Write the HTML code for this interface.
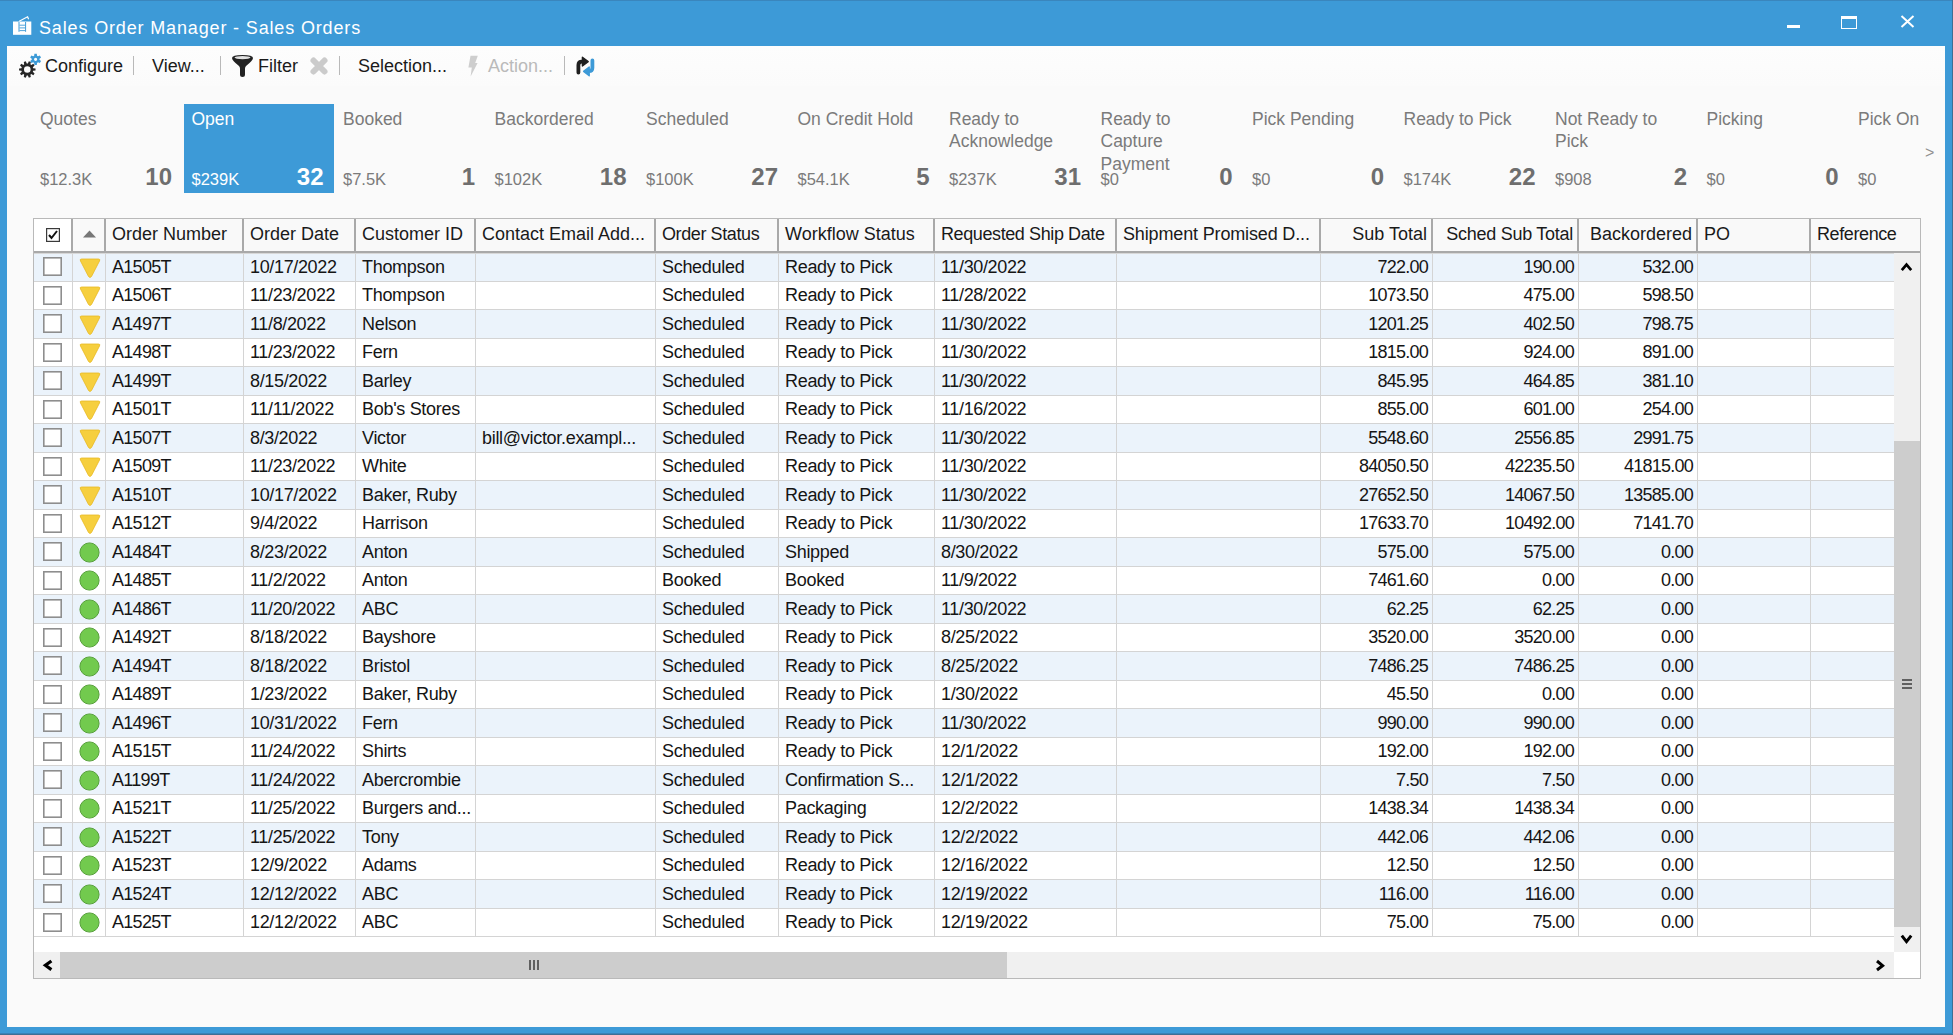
<!DOCTYPE html><html><head><meta charset="utf-8"><title>Sales Order Manager - Sales Orders</title><style>

*{box-sizing:border-box}
html,body{margin:0;padding:0}
body{width:1953px;height:1035px;overflow:hidden;position:relative;background:#3d9ad7;font-family:"Liberation Sans", sans-serif;}
.a{position:absolute;white-space:nowrap}
#win{position:absolute;left:7px;top:46px;width:1938px;height:981px;background:#fafafa}
.title{left:39px;top:17px;font-size:18px;letter-spacing:0.85px;color:#fff;line-height:22px}
.tb{font-size:18px;color:#1a1a1a;top:55px;line-height:22px}
.tsep{width:1px;height:19px;top:56px;background:#b9b9b9}
.tl{font-size:17.5px;color:#7b7b7b;line-height:22.5px;white-space:nowrap}
.tv{font-size:16.5px;color:#7b7b7b;line-height:20px}
.tc{font-size:24px;font-weight:bold;color:#6e6e6e;line-height:26px;text-align:right;width:60px}
.sel .tl,.sel .tv,.sel .tc{color:#fff}
.hd{font-size:18px;color:#1a1a1a;line-height:20px;top:224.3px;letter-spacing:0px}
.c{font-size:18px;color:#151515;line-height:20px;letter-spacing:-0.3px}
.n{letter-spacing:-0.75px}
.d{letter-spacing:-0.35px}
.o{letter-spacing:-0.7px}
.r{text-align:right}

</style></head><body>
<div class="a" style="left:0;top:0;width:1953px;height:1px;background:#3a86bd"></div>
<div class="a" style="left:1952px;top:0;width:1px;height:1035px;background:#3f6f94"></div>
<div class="a" style="left:0;top:1033px;width:1953px;height:1px;background:#3a82b8"></div>
<div class="a" style="left:0;top:1034px;width:1953px;height:1px;background:#3f6f94"></div>
<svg class="a" style="left:13px;top:16px" width="19" height="19" viewBox="0 0 19 19">
<rect x="0" y="5.5" width="18.3" height="13.3" fill="#fff"/>
<path d="M6 6 V15.8 M12.6 6 V15.8" stroke="#3d9ad7" stroke-width="1"/>
<path d="M6.5 9.2 H12.1 M6.5 11.9 H12.1 M6.5 14.6 H12.1" stroke="#3d9ad7" stroke-width="0.9"/>
<path d="M6.2 5.2 L14.6 0.8 L15.6 3.2" stroke="#fff" stroke-width="1.2" fill="none"/>
</svg>
<div class="a title">Sales Order Manager - Sales Orders</div>
<div class="a" style="left:1787px;top:25px;width:13px;height:3px;background:#fff"></div>
<div class="a" style="left:1841px;top:16px;width:16px;height:13px;border:1.5px solid #fff;border-top-width:3px"></div>
<svg class="a" style="left:1900px;top:15px" width="15" height="13" viewBox="0 0 15 13"><path d="M1.5 1 L13.5 12 M13.5 1 L1.5 12" stroke="#fff" stroke-width="2"/></svg>
<div id="win"></div>
<div class="a" style="left:7px;top:46px;width:1938px;height:40px;background:linear-gradient(#fdfdfd,#fbfbfb)"></div>
<svg class="a" style="left:14px;top:50px" width="34" height="32" viewBox="0 0 34 32"><path fill-rule="evenodd" fill="#262626" d="M13.83 13.52 L14.86 11.35 L16.83 11.99 L16.39 14.35 L17.24 14.97 L19.35 13.82 L20.57 15.50 L18.82 17.15 L19.15 18.15 L21.53 18.46 L21.53 20.54 L19.15 20.85 L18.82 21.85 L20.57 23.50 L19.35 25.18 L17.24 24.03 L16.39 24.65 L16.83 27.01 L14.86 27.65 L13.83 25.48 L12.77 25.48 L11.74 27.65 L9.77 27.01 L10.21 24.65 L9.36 24.03 L7.25 25.18 L6.03 23.50 L7.78 21.85 L7.45 20.85 L5.07 20.54 L5.07 18.46 L7.45 18.15 L7.78 17.15 L6.03 15.50 L7.25 13.82 L9.36 14.97 L10.21 14.35 L9.77 11.99 L11.74 11.35 L12.77 13.52 Z M16.60 19.50 A3.3 3.3 0 1 0 10.00 19.50 A3.3 3.3 0 1 0 16.60 19.50 Z"/><path fill-rule="evenodd" fill="#3c9ad6" d="M20.16 5.67 L20.41 3.72 L22.79 3.72 L23.04 5.67 L24.02 6.24 L25.84 5.49 L27.02 7.54 L25.46 8.73 L25.46 9.87 L27.02 11.06 L25.84 13.11 L24.02 12.36 L23.04 12.93 L22.79 14.88 L20.41 14.88 L20.16 12.93 L19.18 12.36 L17.36 13.11 L16.18 11.06 L17.74 9.87 L17.74 8.73 L16.18 7.54 L17.36 5.49 L19.18 6.24 Z M23.20 9.30 A1.6 1.6 0 1 0 20.00 9.30 A1.6 1.6 0 1 0 23.20 9.30 Z"/></svg>
<div class="a tb" style="left:45px">Configure</div>
<div class="a tsep" style="left:133px"></div>
<div class="a tb" style="left:152px">View...</div>
<div class="a tsep" style="left:220px"></div>
<svg class="a" style="left:231px;top:54px" width="23" height="24" viewBox="0 0 23 24"><path d="M1 4 Q1 1 11.5 1 Q22 1 22 4 Q22 6.5 15 12 Q14 13 14 14.5 V20.5 Q14 23 11.5 23 Q9 23 9 20.5 V14.5 Q9 13 8 12 Q1 6.5 1 4 Z" fill="#222"/><ellipse cx="11.5" cy="3.6" rx="8" ry="1.6" fill="#e2e2e2"/></svg>
<div class="a tb" style="left:258px">Filter</div>
<svg class="a" style="left:309px;top:56px" width="20" height="20" viewBox="0 0 20 20"><path d="M4.5 4.5 L15.5 15.5 M15.5 4.5 L4.5 15.5" stroke="#cbcbcb" stroke-width="6" stroke-linecap="round"/></svg>
<div class="a tsep" style="left:339px"></div>
<div class="a tb" style="left:358px">Selection...</div>
<svg class="a" style="left:466px;top:55px" width="14" height="22" viewBox="0 0 14 22"><path d="M4.5 0.8 H11.8 L9.2 8 H11.6 L4.6 21.5 L5.8 12.6 H2.4 Z" fill="#cecece"/></svg>
<div class="a tb" style="left:488px;color:#bababa">Action...</div>
<div class="a tsep" style="left:564px"></div>
<svg class="a" style="left:575px;top:55px" width="22" height="23" viewBox="0 0 22 23">
<path d="M3.4 17.6 V10 Q3.4 6.6 6.8 6.6 H8.5" stroke="#1f1f1f" stroke-width="3.8" fill="none" stroke-linecap="round"/><path d="M7.4 2.3 L13.2 6.6 L7.4 10.9 Z" fill="#1f1f1f" stroke="#1f1f1f" stroke-width="1.4" stroke-linejoin="round"/>
<path d="M17.4 5.4 V12.8 Q17.4 16.2 14 16.2 H12.5" stroke="#3d9ad7" stroke-width="3.8" fill="none" stroke-linecap="round"/><path d="M14.2 12 L8.6 16.4 L14.2 20.8 Z" fill="#3d9ad7" stroke="#3d9ad7" stroke-width="1.4" stroke-linejoin="round"/></svg>
<div class="">
<div class="a tl" style="left:40.0px;top:107.5px">Quotes</div>
<div class="a tv" style="left:40.0px;top:169px">$12.3K</div>
<div class="a tc" style="left:112.0px;top:164px">10</div>
</div>
<div class="a" style="left:183.5px;top:104px;width:150px;height:89px;background:#3d9ad7"></div>
<div class="sel">
<div class="a tl" style="left:191.5px;top:107.5px">Open</div>
<div class="a tv" style="left:191.5px;top:169px">$239K</div>
<div class="a tc" style="left:263.5px;top:164px">32</div>
</div>
<div class="">
<div class="a tl" style="left:343.0px;top:107.5px">Booked</div>
<div class="a tv" style="left:343.0px;top:169px">$7.5K</div>
<div class="a tc" style="left:415.0px;top:164px">1</div>
</div>
<div class="">
<div class="a tl" style="left:494.5px;top:107.5px">Backordered</div>
<div class="a tv" style="left:494.5px;top:169px">$102K</div>
<div class="a tc" style="left:566.5px;top:164px">18</div>
</div>
<div class="">
<div class="a tl" style="left:646.0px;top:107.5px">Scheduled</div>
<div class="a tv" style="left:646.0px;top:169px">$100K</div>
<div class="a tc" style="left:718.0px;top:164px">27</div>
</div>
<div class="">
<div class="a tl" style="left:797.5px;top:107.5px">On Credit Hold</div>
<div class="a tv" style="left:797.5px;top:169px">$54.1K</div>
<div class="a tc" style="left:869.5px;top:164px">5</div>
</div>
<div class="">
<div class="a tl" style="left:949.0px;top:107.5px">Ready to<br>Acknowledge</div>
<div class="a tv" style="left:949.0px;top:169px">$237K</div>
<div class="a tc" style="left:1021.0px;top:164px">31</div>
</div>
<div class="">
<div class="a tl" style="left:1100.5px;top:107.5px">Ready to<br>Capture<br>Payment</div>
<div class="a tv" style="left:1100.5px;top:169px">$0</div>
<div class="a tc" style="left:1172.5px;top:164px">0</div>
</div>
<div class="">
<div class="a tl" style="left:1252.0px;top:107.5px">Pick Pending</div>
<div class="a tv" style="left:1252.0px;top:169px">$0</div>
<div class="a tc" style="left:1324.0px;top:164px">0</div>
</div>
<div class="">
<div class="a tl" style="left:1403.5px;top:107.5px">Ready to Pick</div>
<div class="a tv" style="left:1403.5px;top:169px">$174K</div>
<div class="a tc" style="left:1475.5px;top:164px">22</div>
</div>
<div class="">
<div class="a tl" style="left:1555.0px;top:107.5px">Not Ready to<br>Pick</div>
<div class="a tv" style="left:1555.0px;top:169px">$908</div>
<div class="a tc" style="left:1627.0px;top:164px">2</div>
</div>
<div class="">
<div class="a tl" style="left:1706.5px;top:107.5px">Picking</div>
<div class="a tv" style="left:1706.5px;top:169px">$0</div>
<div class="a tc" style="left:1778.5px;top:164px">0</div>
</div>
<div class="">
<div class="a tl" style="left:1858.0px;top:107.5px">Pick On</div>
<div class="a tv" style="left:1858.0px;top:169px">$0</div>
</div>
<div class="a" style="left:1925px;top:144px;font-size:16px;color:#909090">&gt;</div>
<div class="a" style="left:33px;top:218px;width:1888px;height:761px;background:#fff;border:1px solid #b9b9b9"></div>
<div class="a" style="left:34px;top:219px;width:1886px;height:33px;background:#f9f9f9"></div>
<div class="a" style="left:34px;top:219px;width:37px;height:33px;background:#fff"></div>
<div class="a" style="left:34px;top:252.00px;width:1860px;height:28.50px;background:#ebf3fb"></div>
<div class="a" style="left:34px;top:309.00px;width:1860px;height:28.50px;background:#ebf3fb"></div>
<div class="a" style="left:34px;top:366.00px;width:1860px;height:28.50px;background:#ebf3fb"></div>
<div class="a" style="left:34px;top:423.00px;width:1860px;height:28.50px;background:#ebf3fb"></div>
<div class="a" style="left:34px;top:480.00px;width:1860px;height:28.50px;background:#ebf3fb"></div>
<div class="a" style="left:34px;top:537.00px;width:1860px;height:28.50px;background:#ebf3fb"></div>
<div class="a" style="left:34px;top:594.00px;width:1860px;height:28.50px;background:#ebf3fb"></div>
<div class="a" style="left:34px;top:651.00px;width:1860px;height:28.50px;background:#ebf3fb"></div>
<div class="a" style="left:34px;top:708.00px;width:1860px;height:28.50px;background:#ebf3fb"></div>
<div class="a" style="left:34px;top:765.00px;width:1860px;height:28.50px;background:#ebf3fb"></div>
<div class="a" style="left:34px;top:822.00px;width:1860px;height:28.50px;background:#ebf3fb"></div>
<div class="a" style="left:34px;top:879.00px;width:1860px;height:28.50px;background:#ebf3fb"></div>
<div class="a" style="left:34px;top:280.50px;width:1860px;height:1px;background:#d4d4d4"></div>
<div class="a" style="left:34px;top:309.00px;width:1860px;height:1px;background:#d4d4d4"></div>
<div class="a" style="left:34px;top:337.50px;width:1860px;height:1px;background:#d4d4d4"></div>
<div class="a" style="left:34px;top:366.00px;width:1860px;height:1px;background:#d4d4d4"></div>
<div class="a" style="left:34px;top:394.50px;width:1860px;height:1px;background:#d4d4d4"></div>
<div class="a" style="left:34px;top:423.00px;width:1860px;height:1px;background:#d4d4d4"></div>
<div class="a" style="left:34px;top:451.50px;width:1860px;height:1px;background:#d4d4d4"></div>
<div class="a" style="left:34px;top:480.00px;width:1860px;height:1px;background:#d4d4d4"></div>
<div class="a" style="left:34px;top:508.50px;width:1860px;height:1px;background:#d4d4d4"></div>
<div class="a" style="left:34px;top:537.00px;width:1860px;height:1px;background:#d4d4d4"></div>
<div class="a" style="left:34px;top:565.50px;width:1860px;height:1px;background:#d4d4d4"></div>
<div class="a" style="left:34px;top:594.00px;width:1860px;height:1px;background:#d4d4d4"></div>
<div class="a" style="left:34px;top:622.50px;width:1860px;height:1px;background:#d4d4d4"></div>
<div class="a" style="left:34px;top:651.00px;width:1860px;height:1px;background:#d4d4d4"></div>
<div class="a" style="left:34px;top:679.50px;width:1860px;height:1px;background:#d4d4d4"></div>
<div class="a" style="left:34px;top:708.00px;width:1860px;height:1px;background:#d4d4d4"></div>
<div class="a" style="left:34px;top:736.50px;width:1860px;height:1px;background:#d4d4d4"></div>
<div class="a" style="left:34px;top:765.00px;width:1860px;height:1px;background:#d4d4d4"></div>
<div class="a" style="left:34px;top:793.50px;width:1860px;height:1px;background:#d4d4d4"></div>
<div class="a" style="left:34px;top:822.00px;width:1860px;height:1px;background:#d4d4d4"></div>
<div class="a" style="left:34px;top:850.50px;width:1860px;height:1px;background:#d4d4d4"></div>
<div class="a" style="left:34px;top:879.00px;width:1860px;height:1px;background:#d4d4d4"></div>
<div class="a" style="left:34px;top:907.50px;width:1860px;height:1px;background:#d4d4d4"></div>
<div class="a" style="left:34px;top:936.00px;width:1860px;height:1px;background:#d4d4d4"></div>
<div class="a" style="left:72px;top:252px;width:1px;height:685.0px;background:#d4d4d4"></div>
<div class="a" style="left:105px;top:252px;width:1px;height:685.0px;background:#d4d4d4"></div>
<div class="a" style="left:243px;top:252px;width:1px;height:685.0px;background:#d4d4d4"></div>
<div class="a" style="left:355px;top:252px;width:1px;height:685.0px;background:#d4d4d4"></div>
<div class="a" style="left:475px;top:252px;width:1px;height:685.0px;background:#d4d4d4"></div>
<div class="a" style="left:655px;top:252px;width:1px;height:685.0px;background:#d4d4d4"></div>
<div class="a" style="left:778px;top:252px;width:1px;height:685.0px;background:#d4d4d4"></div>
<div class="a" style="left:934px;top:252px;width:1px;height:685.0px;background:#d4d4d4"></div>
<div class="a" style="left:1116px;top:252px;width:1px;height:685.0px;background:#d4d4d4"></div>
<div class="a" style="left:1320px;top:252px;width:1px;height:685.0px;background:#d4d4d4"></div>
<div class="a" style="left:1432px;top:252px;width:1px;height:685.0px;background:#d4d4d4"></div>
<div class="a" style="left:1578px;top:252px;width:1px;height:685.0px;background:#d4d4d4"></div>
<div class="a" style="left:1697px;top:252px;width:1px;height:685.0px;background:#d4d4d4"></div>
<div class="a" style="left:1810px;top:252px;width:1px;height:685.0px;background:#d4d4d4"></div>
<div class="a" style="left:71px;top:219px;width:2px;height:33px;background:#a9a9a9"></div>
<div class="a" style="left:104px;top:219px;width:2px;height:33px;background:#a9a9a9"></div>
<div class="a" style="left:242px;top:219px;width:2px;height:33px;background:#a9a9a9"></div>
<div class="a" style="left:354px;top:219px;width:2px;height:33px;background:#a9a9a9"></div>
<div class="a" style="left:474px;top:219px;width:2px;height:33px;background:#a9a9a9"></div>
<div class="a" style="left:654px;top:219px;width:2px;height:33px;background:#a9a9a9"></div>
<div class="a" style="left:777px;top:219px;width:2px;height:33px;background:#a9a9a9"></div>
<div class="a" style="left:933px;top:219px;width:2px;height:33px;background:#a9a9a9"></div>
<div class="a" style="left:1115px;top:219px;width:2px;height:33px;background:#a9a9a9"></div>
<div class="a" style="left:1319px;top:219px;width:2px;height:33px;background:#a9a9a9"></div>
<div class="a" style="left:1431px;top:219px;width:2px;height:33px;background:#a9a9a9"></div>
<div class="a" style="left:1577px;top:219px;width:2px;height:33px;background:#a9a9a9"></div>
<div class="a" style="left:1696px;top:219px;width:2px;height:33px;background:#a9a9a9"></div>
<div class="a" style="left:1809px;top:219px;width:2px;height:33px;background:#a9a9a9"></div>
<div class="a" style="left:34px;top:251px;width:1886px;height:2px;background:#a9a9a9"></div>
<div class="a" style="left:34px;top:253px;width:1886px;height:1px;background:#d8d8d8"></div>
<svg class="a" style="left:46px;top:228px" width="14" height="14" viewBox="0 0 14 14"><rect x="0.6" y="0.6" width="12.8" height="12.8" fill="#fff" stroke="#3a3a3a" stroke-width="1.2"/><path d="M3 7 L5.5 10 L11 3" stroke="#111" stroke-width="2" fill="none"/></svg>
<svg class="a" style="left:83px;top:230px" width="13" height="8" viewBox="0 0 13 8"><path d="M0 7.5 L6.5 0.5 L13 7.5 Z" fill="#777"/></svg>
<div class="a hd" style="left:112px;letter-spacing:0px">Order Number</div>
<div class="a hd" style="left:250px;letter-spacing:0px">Order Date</div>
<div class="a hd" style="left:362px;letter-spacing:0px">Customer ID</div>
<div class="a hd" style="left:482px;letter-spacing:0px">Contact Email Add...</div>
<div class="a hd" style="left:662px;letter-spacing:-0.4px">Order Status</div>
<div class="a hd" style="left:785px;letter-spacing:0px">Workflow Status</div>
<div class="a hd" style="left:941px;letter-spacing:-0.4px">Requested Ship Date</div>
<div class="a hd" style="left:1123px;letter-spacing:-0.15px">Shipment Promised D...</div>
<div class="a hd r" style="left:1319px;width:108px;letter-spacing:0px">Sub Total</div>
<div class="a hd r" style="left:1431px;width:142px;letter-spacing:-0.27px">Sched Sub Total</div>
<div class="a hd r" style="left:1577px;width:115px;letter-spacing:0px">Backordered</div>
<div class="a hd" style="left:1704px;letter-spacing:0px">PO</div>
<div class="a hd" style="left:1817px;letter-spacing:-0.4px">Reference</div>
<svg class="a" style="left:43px;top:257.0px" width="19" height="19" viewBox="0 0 19 19"><rect x="0.8" y="0.8" width="17.4" height="17.4" fill="#fff" stroke="#8e8e8e" stroke-width="1.6"/></svg>
<svg class="a" style="left:79px;top:257.5px" width="22" height="20" viewBox="0 0 22 20"><path d="M2.5 1 H19.5 Q21.5 1 20.5 3 L12.5 18.5 Q11 20.5 9.5 18.5 L1.5 3 Q0.5 1 2.5 1 Z" fill="#f6cf3e" stroke="#e8b923" stroke-width="0.8"/></svg>
<div class="a c o" style="left:112px;top:256.8px">A1505T</div>
<div class="a c d" style="left:250px;top:256.8px">10/17/2022</div>
<div class="a c" style="left:362px;top:256.8px">Thompson</div>
<div class="a c" style="left:662px;top:256.8px">Scheduled</div>
<div class="a c" style="left:785px;top:256.8px">Ready to Pick</div>
<div class="a c d" style="left:941px;top:256.8px">11/30/2022</div>
<div class="a c n r" style="left:1319px;top:256.8px;width:109px">722.00</div>
<div class="a c n r" style="left:1431px;top:256.8px;width:143px">190.00</div>
<div class="a c n r" style="left:1577px;top:256.8px;width:116px">532.00</div>
<svg class="a" style="left:43px;top:285.5px" width="19" height="19" viewBox="0 0 19 19"><rect x="0.8" y="0.8" width="17.4" height="17.4" fill="#fff" stroke="#8e8e8e" stroke-width="1.6"/></svg>
<svg class="a" style="left:79px;top:286.0px" width="22" height="20" viewBox="0 0 22 20"><path d="M2.5 1 H19.5 Q21.5 1 20.5 3 L12.5 18.5 Q11 20.5 9.5 18.5 L1.5 3 Q0.5 1 2.5 1 Z" fill="#f6cf3e" stroke="#e8b923" stroke-width="0.8"/></svg>
<div class="a c o" style="left:112px;top:285.3px">A1506T</div>
<div class="a c d" style="left:250px;top:285.3px">11/23/2022</div>
<div class="a c" style="left:362px;top:285.3px">Thompson</div>
<div class="a c" style="left:662px;top:285.3px">Scheduled</div>
<div class="a c" style="left:785px;top:285.3px">Ready to Pick</div>
<div class="a c d" style="left:941px;top:285.3px">11/28/2022</div>
<div class="a c n r" style="left:1319px;top:285.3px;width:109px">1073.50</div>
<div class="a c n r" style="left:1431px;top:285.3px;width:143px">475.00</div>
<div class="a c n r" style="left:1577px;top:285.3px;width:116px">598.50</div>
<svg class="a" style="left:43px;top:314.0px" width="19" height="19" viewBox="0 0 19 19"><rect x="0.8" y="0.8" width="17.4" height="17.4" fill="#fff" stroke="#8e8e8e" stroke-width="1.6"/></svg>
<svg class="a" style="left:79px;top:314.5px" width="22" height="20" viewBox="0 0 22 20"><path d="M2.5 1 H19.5 Q21.5 1 20.5 3 L12.5 18.5 Q11 20.5 9.5 18.5 L1.5 3 Q0.5 1 2.5 1 Z" fill="#f6cf3e" stroke="#e8b923" stroke-width="0.8"/></svg>
<div class="a c o" style="left:112px;top:313.8px">A1497T</div>
<div class="a c d" style="left:250px;top:313.8px">11/8/2022</div>
<div class="a c" style="left:362px;top:313.8px">Nelson</div>
<div class="a c" style="left:662px;top:313.8px">Scheduled</div>
<div class="a c" style="left:785px;top:313.8px">Ready to Pick</div>
<div class="a c d" style="left:941px;top:313.8px">11/30/2022</div>
<div class="a c n r" style="left:1319px;top:313.8px;width:109px">1201.25</div>
<div class="a c n r" style="left:1431px;top:313.8px;width:143px">402.50</div>
<div class="a c n r" style="left:1577px;top:313.8px;width:116px">798.75</div>
<svg class="a" style="left:43px;top:342.5px" width="19" height="19" viewBox="0 0 19 19"><rect x="0.8" y="0.8" width="17.4" height="17.4" fill="#fff" stroke="#8e8e8e" stroke-width="1.6"/></svg>
<svg class="a" style="left:79px;top:343.0px" width="22" height="20" viewBox="0 0 22 20"><path d="M2.5 1 H19.5 Q21.5 1 20.5 3 L12.5 18.5 Q11 20.5 9.5 18.5 L1.5 3 Q0.5 1 2.5 1 Z" fill="#f6cf3e" stroke="#e8b923" stroke-width="0.8"/></svg>
<div class="a c o" style="left:112px;top:342.3px">A1498T</div>
<div class="a c d" style="left:250px;top:342.3px">11/23/2022</div>
<div class="a c" style="left:362px;top:342.3px">Fern</div>
<div class="a c" style="left:662px;top:342.3px">Scheduled</div>
<div class="a c" style="left:785px;top:342.3px">Ready to Pick</div>
<div class="a c d" style="left:941px;top:342.3px">11/30/2022</div>
<div class="a c n r" style="left:1319px;top:342.3px;width:109px">1815.00</div>
<div class="a c n r" style="left:1431px;top:342.3px;width:143px">924.00</div>
<div class="a c n r" style="left:1577px;top:342.3px;width:116px">891.00</div>
<svg class="a" style="left:43px;top:371.0px" width="19" height="19" viewBox="0 0 19 19"><rect x="0.8" y="0.8" width="17.4" height="17.4" fill="#fff" stroke="#8e8e8e" stroke-width="1.6"/></svg>
<svg class="a" style="left:79px;top:371.5px" width="22" height="20" viewBox="0 0 22 20"><path d="M2.5 1 H19.5 Q21.5 1 20.5 3 L12.5 18.5 Q11 20.5 9.5 18.5 L1.5 3 Q0.5 1 2.5 1 Z" fill="#f6cf3e" stroke="#e8b923" stroke-width="0.8"/></svg>
<div class="a c o" style="left:112px;top:370.8px">A1499T</div>
<div class="a c d" style="left:250px;top:370.8px">8/15/2022</div>
<div class="a c" style="left:362px;top:370.8px">Barley</div>
<div class="a c" style="left:662px;top:370.8px">Scheduled</div>
<div class="a c" style="left:785px;top:370.8px">Ready to Pick</div>
<div class="a c d" style="left:941px;top:370.8px">11/30/2022</div>
<div class="a c n r" style="left:1319px;top:370.8px;width:109px">845.95</div>
<div class="a c n r" style="left:1431px;top:370.8px;width:143px">464.85</div>
<div class="a c n r" style="left:1577px;top:370.8px;width:116px">381.10</div>
<svg class="a" style="left:43px;top:399.5px" width="19" height="19" viewBox="0 0 19 19"><rect x="0.8" y="0.8" width="17.4" height="17.4" fill="#fff" stroke="#8e8e8e" stroke-width="1.6"/></svg>
<svg class="a" style="left:79px;top:400.0px" width="22" height="20" viewBox="0 0 22 20"><path d="M2.5 1 H19.5 Q21.5 1 20.5 3 L12.5 18.5 Q11 20.5 9.5 18.5 L1.5 3 Q0.5 1 2.5 1 Z" fill="#f6cf3e" stroke="#e8b923" stroke-width="0.8"/></svg>
<div class="a c o" style="left:112px;top:399.3px">A1501T</div>
<div class="a c d" style="left:250px;top:399.3px">11/11/2022</div>
<div class="a c" style="left:362px;top:399.3px">Bob's Stores</div>
<div class="a c" style="left:662px;top:399.3px">Scheduled</div>
<div class="a c" style="left:785px;top:399.3px">Ready to Pick</div>
<div class="a c d" style="left:941px;top:399.3px">11/16/2022</div>
<div class="a c n r" style="left:1319px;top:399.3px;width:109px">855.00</div>
<div class="a c n r" style="left:1431px;top:399.3px;width:143px">601.00</div>
<div class="a c n r" style="left:1577px;top:399.3px;width:116px">254.00</div>
<svg class="a" style="left:43px;top:428.0px" width="19" height="19" viewBox="0 0 19 19"><rect x="0.8" y="0.8" width="17.4" height="17.4" fill="#fff" stroke="#8e8e8e" stroke-width="1.6"/></svg>
<svg class="a" style="left:79px;top:428.5px" width="22" height="20" viewBox="0 0 22 20"><path d="M2.5 1 H19.5 Q21.5 1 20.5 3 L12.5 18.5 Q11 20.5 9.5 18.5 L1.5 3 Q0.5 1 2.5 1 Z" fill="#f6cf3e" stroke="#e8b923" stroke-width="0.8"/></svg>
<div class="a c o" style="left:112px;top:427.8px">A1507T</div>
<div class="a c d" style="left:250px;top:427.8px">8/3/2022</div>
<div class="a c" style="left:362px;top:427.8px">Victor</div>
<div class="a c" style="left:482px;top:427.8px">bill@victor.exampl...</div>
<div class="a c" style="left:662px;top:427.8px">Scheduled</div>
<div class="a c" style="left:785px;top:427.8px">Ready to Pick</div>
<div class="a c d" style="left:941px;top:427.8px">11/30/2022</div>
<div class="a c n r" style="left:1319px;top:427.8px;width:109px">5548.60</div>
<div class="a c n r" style="left:1431px;top:427.8px;width:143px">2556.85</div>
<div class="a c n r" style="left:1577px;top:427.8px;width:116px">2991.75</div>
<svg class="a" style="left:43px;top:456.5px" width="19" height="19" viewBox="0 0 19 19"><rect x="0.8" y="0.8" width="17.4" height="17.4" fill="#fff" stroke="#8e8e8e" stroke-width="1.6"/></svg>
<svg class="a" style="left:79px;top:457.0px" width="22" height="20" viewBox="0 0 22 20"><path d="M2.5 1 H19.5 Q21.5 1 20.5 3 L12.5 18.5 Q11 20.5 9.5 18.5 L1.5 3 Q0.5 1 2.5 1 Z" fill="#f6cf3e" stroke="#e8b923" stroke-width="0.8"/></svg>
<div class="a c o" style="left:112px;top:456.3px">A1509T</div>
<div class="a c d" style="left:250px;top:456.3px">11/23/2022</div>
<div class="a c" style="left:362px;top:456.3px">White</div>
<div class="a c" style="left:662px;top:456.3px">Scheduled</div>
<div class="a c" style="left:785px;top:456.3px">Ready to Pick</div>
<div class="a c d" style="left:941px;top:456.3px">11/30/2022</div>
<div class="a c n r" style="left:1319px;top:456.3px;width:109px">84050.50</div>
<div class="a c n r" style="left:1431px;top:456.3px;width:143px">42235.50</div>
<div class="a c n r" style="left:1577px;top:456.3px;width:116px">41815.00</div>
<svg class="a" style="left:43px;top:485.0px" width="19" height="19" viewBox="0 0 19 19"><rect x="0.8" y="0.8" width="17.4" height="17.4" fill="#fff" stroke="#8e8e8e" stroke-width="1.6"/></svg>
<svg class="a" style="left:79px;top:485.5px" width="22" height="20" viewBox="0 0 22 20"><path d="M2.5 1 H19.5 Q21.5 1 20.5 3 L12.5 18.5 Q11 20.5 9.5 18.5 L1.5 3 Q0.5 1 2.5 1 Z" fill="#f6cf3e" stroke="#e8b923" stroke-width="0.8"/></svg>
<div class="a c o" style="left:112px;top:484.8px">A1510T</div>
<div class="a c d" style="left:250px;top:484.8px">10/17/2022</div>
<div class="a c" style="left:362px;top:484.8px">Baker, Ruby</div>
<div class="a c" style="left:662px;top:484.8px">Scheduled</div>
<div class="a c" style="left:785px;top:484.8px">Ready to Pick</div>
<div class="a c d" style="left:941px;top:484.8px">11/30/2022</div>
<div class="a c n r" style="left:1319px;top:484.8px;width:109px">27652.50</div>
<div class="a c n r" style="left:1431px;top:484.8px;width:143px">14067.50</div>
<div class="a c n r" style="left:1577px;top:484.8px;width:116px">13585.00</div>
<svg class="a" style="left:43px;top:513.5px" width="19" height="19" viewBox="0 0 19 19"><rect x="0.8" y="0.8" width="17.4" height="17.4" fill="#fff" stroke="#8e8e8e" stroke-width="1.6"/></svg>
<svg class="a" style="left:79px;top:514.0px" width="22" height="20" viewBox="0 0 22 20"><path d="M2.5 1 H19.5 Q21.5 1 20.5 3 L12.5 18.5 Q11 20.5 9.5 18.5 L1.5 3 Q0.5 1 2.5 1 Z" fill="#f6cf3e" stroke="#e8b923" stroke-width="0.8"/></svg>
<div class="a c o" style="left:112px;top:513.3px">A1512T</div>
<div class="a c d" style="left:250px;top:513.3px">9/4/2022</div>
<div class="a c" style="left:362px;top:513.3px">Harrison</div>
<div class="a c" style="left:662px;top:513.3px">Scheduled</div>
<div class="a c" style="left:785px;top:513.3px">Ready to Pick</div>
<div class="a c d" style="left:941px;top:513.3px">11/30/2022</div>
<div class="a c n r" style="left:1319px;top:513.3px;width:109px">17633.70</div>
<div class="a c n r" style="left:1431px;top:513.3px;width:143px">10492.00</div>
<div class="a c n r" style="left:1577px;top:513.3px;width:116px">7141.70</div>
<svg class="a" style="left:43px;top:542.0px" width="19" height="19" viewBox="0 0 19 19"><rect x="0.8" y="0.8" width="17.4" height="17.4" fill="#fff" stroke="#8e8e8e" stroke-width="1.6"/></svg>
<svg class="a" style="left:79px;top:541.5px" width="21" height="21" viewBox="0 0 21 21"><circle cx="10.5" cy="10.5" r="9.6" fill="#72ca4e" stroke="#58a03c" stroke-width="1"/></svg>
<div class="a c o" style="left:112px;top:541.8px">A1484T</div>
<div class="a c d" style="left:250px;top:541.8px">8/23/2022</div>
<div class="a c" style="left:362px;top:541.8px">Anton</div>
<div class="a c" style="left:662px;top:541.8px">Scheduled</div>
<div class="a c" style="left:785px;top:541.8px">Shipped</div>
<div class="a c d" style="left:941px;top:541.8px">8/30/2022</div>
<div class="a c n r" style="left:1319px;top:541.8px;width:109px">575.00</div>
<div class="a c n r" style="left:1431px;top:541.8px;width:143px">575.00</div>
<div class="a c n r" style="left:1577px;top:541.8px;width:116px">0.00</div>
<svg class="a" style="left:43px;top:570.5px" width="19" height="19" viewBox="0 0 19 19"><rect x="0.8" y="0.8" width="17.4" height="17.4" fill="#fff" stroke="#8e8e8e" stroke-width="1.6"/></svg>
<svg class="a" style="left:79px;top:570.0px" width="21" height="21" viewBox="0 0 21 21"><circle cx="10.5" cy="10.5" r="9.6" fill="#72ca4e" stroke="#58a03c" stroke-width="1"/></svg>
<div class="a c o" style="left:112px;top:570.3px">A1485T</div>
<div class="a c d" style="left:250px;top:570.3px">11/2/2022</div>
<div class="a c" style="left:362px;top:570.3px">Anton</div>
<div class="a c" style="left:662px;top:570.3px">Booked</div>
<div class="a c" style="left:785px;top:570.3px">Booked</div>
<div class="a c d" style="left:941px;top:570.3px">11/9/2022</div>
<div class="a c n r" style="left:1319px;top:570.3px;width:109px">7461.60</div>
<div class="a c n r" style="left:1431px;top:570.3px;width:143px">0.00</div>
<div class="a c n r" style="left:1577px;top:570.3px;width:116px">0.00</div>
<svg class="a" style="left:43px;top:599.0px" width="19" height="19" viewBox="0 0 19 19"><rect x="0.8" y="0.8" width="17.4" height="17.4" fill="#fff" stroke="#8e8e8e" stroke-width="1.6"/></svg>
<svg class="a" style="left:79px;top:598.5px" width="21" height="21" viewBox="0 0 21 21"><circle cx="10.5" cy="10.5" r="9.6" fill="#72ca4e" stroke="#58a03c" stroke-width="1"/></svg>
<div class="a c o" style="left:112px;top:598.8px">A1486T</div>
<div class="a c d" style="left:250px;top:598.8px">11/20/2022</div>
<div class="a c" style="left:362px;top:598.8px">ABC</div>
<div class="a c" style="left:662px;top:598.8px">Scheduled</div>
<div class="a c" style="left:785px;top:598.8px">Ready to Pick</div>
<div class="a c d" style="left:941px;top:598.8px">11/30/2022</div>
<div class="a c n r" style="left:1319px;top:598.8px;width:109px">62.25</div>
<div class="a c n r" style="left:1431px;top:598.8px;width:143px">62.25</div>
<div class="a c n r" style="left:1577px;top:598.8px;width:116px">0.00</div>
<svg class="a" style="left:43px;top:627.5px" width="19" height="19" viewBox="0 0 19 19"><rect x="0.8" y="0.8" width="17.4" height="17.4" fill="#fff" stroke="#8e8e8e" stroke-width="1.6"/></svg>
<svg class="a" style="left:79px;top:627.0px" width="21" height="21" viewBox="0 0 21 21"><circle cx="10.5" cy="10.5" r="9.6" fill="#72ca4e" stroke="#58a03c" stroke-width="1"/></svg>
<div class="a c o" style="left:112px;top:627.3px">A1492T</div>
<div class="a c d" style="left:250px;top:627.3px">8/18/2022</div>
<div class="a c" style="left:362px;top:627.3px">Bayshore</div>
<div class="a c" style="left:662px;top:627.3px">Scheduled</div>
<div class="a c" style="left:785px;top:627.3px">Ready to Pick</div>
<div class="a c d" style="left:941px;top:627.3px">8/25/2022</div>
<div class="a c n r" style="left:1319px;top:627.3px;width:109px">3520.00</div>
<div class="a c n r" style="left:1431px;top:627.3px;width:143px">3520.00</div>
<div class="a c n r" style="left:1577px;top:627.3px;width:116px">0.00</div>
<svg class="a" style="left:43px;top:656.0px" width="19" height="19" viewBox="0 0 19 19"><rect x="0.8" y="0.8" width="17.4" height="17.4" fill="#fff" stroke="#8e8e8e" stroke-width="1.6"/></svg>
<svg class="a" style="left:79px;top:655.5px" width="21" height="21" viewBox="0 0 21 21"><circle cx="10.5" cy="10.5" r="9.6" fill="#72ca4e" stroke="#58a03c" stroke-width="1"/></svg>
<div class="a c o" style="left:112px;top:655.8px">A1494T</div>
<div class="a c d" style="left:250px;top:655.8px">8/18/2022</div>
<div class="a c" style="left:362px;top:655.8px">Bristol</div>
<div class="a c" style="left:662px;top:655.8px">Scheduled</div>
<div class="a c" style="left:785px;top:655.8px">Ready to Pick</div>
<div class="a c d" style="left:941px;top:655.8px">8/25/2022</div>
<div class="a c n r" style="left:1319px;top:655.8px;width:109px">7486.25</div>
<div class="a c n r" style="left:1431px;top:655.8px;width:143px">7486.25</div>
<div class="a c n r" style="left:1577px;top:655.8px;width:116px">0.00</div>
<svg class="a" style="left:43px;top:684.5px" width="19" height="19" viewBox="0 0 19 19"><rect x="0.8" y="0.8" width="17.4" height="17.4" fill="#fff" stroke="#8e8e8e" stroke-width="1.6"/></svg>
<svg class="a" style="left:79px;top:684.0px" width="21" height="21" viewBox="0 0 21 21"><circle cx="10.5" cy="10.5" r="9.6" fill="#72ca4e" stroke="#58a03c" stroke-width="1"/></svg>
<div class="a c o" style="left:112px;top:684.3px">A1489T</div>
<div class="a c d" style="left:250px;top:684.3px">1/23/2022</div>
<div class="a c" style="left:362px;top:684.3px">Baker, Ruby</div>
<div class="a c" style="left:662px;top:684.3px">Scheduled</div>
<div class="a c" style="left:785px;top:684.3px">Ready to Pick</div>
<div class="a c d" style="left:941px;top:684.3px">1/30/2022</div>
<div class="a c n r" style="left:1319px;top:684.3px;width:109px">45.50</div>
<div class="a c n r" style="left:1431px;top:684.3px;width:143px">0.00</div>
<div class="a c n r" style="left:1577px;top:684.3px;width:116px">0.00</div>
<svg class="a" style="left:43px;top:713.0px" width="19" height="19" viewBox="0 0 19 19"><rect x="0.8" y="0.8" width="17.4" height="17.4" fill="#fff" stroke="#8e8e8e" stroke-width="1.6"/></svg>
<svg class="a" style="left:79px;top:712.5px" width="21" height="21" viewBox="0 0 21 21"><circle cx="10.5" cy="10.5" r="9.6" fill="#72ca4e" stroke="#58a03c" stroke-width="1"/></svg>
<div class="a c o" style="left:112px;top:712.8px">A1496T</div>
<div class="a c d" style="left:250px;top:712.8px">10/31/2022</div>
<div class="a c" style="left:362px;top:712.8px">Fern</div>
<div class="a c" style="left:662px;top:712.8px">Scheduled</div>
<div class="a c" style="left:785px;top:712.8px">Ready to Pick</div>
<div class="a c d" style="left:941px;top:712.8px">11/30/2022</div>
<div class="a c n r" style="left:1319px;top:712.8px;width:109px">990.00</div>
<div class="a c n r" style="left:1431px;top:712.8px;width:143px">990.00</div>
<div class="a c n r" style="left:1577px;top:712.8px;width:116px">0.00</div>
<svg class="a" style="left:43px;top:741.5px" width="19" height="19" viewBox="0 0 19 19"><rect x="0.8" y="0.8" width="17.4" height="17.4" fill="#fff" stroke="#8e8e8e" stroke-width="1.6"/></svg>
<svg class="a" style="left:79px;top:741.0px" width="21" height="21" viewBox="0 0 21 21"><circle cx="10.5" cy="10.5" r="9.6" fill="#72ca4e" stroke="#58a03c" stroke-width="1"/></svg>
<div class="a c o" style="left:112px;top:741.3px">A1515T</div>
<div class="a c d" style="left:250px;top:741.3px">11/24/2022</div>
<div class="a c" style="left:362px;top:741.3px">Shirts</div>
<div class="a c" style="left:662px;top:741.3px">Scheduled</div>
<div class="a c" style="left:785px;top:741.3px">Ready to Pick</div>
<div class="a c d" style="left:941px;top:741.3px">12/1/2022</div>
<div class="a c n r" style="left:1319px;top:741.3px;width:109px">192.00</div>
<div class="a c n r" style="left:1431px;top:741.3px;width:143px">192.00</div>
<div class="a c n r" style="left:1577px;top:741.3px;width:116px">0.00</div>
<svg class="a" style="left:43px;top:770.0px" width="19" height="19" viewBox="0 0 19 19"><rect x="0.8" y="0.8" width="17.4" height="17.4" fill="#fff" stroke="#8e8e8e" stroke-width="1.6"/></svg>
<svg class="a" style="left:79px;top:769.5px" width="21" height="21" viewBox="0 0 21 21"><circle cx="10.5" cy="10.5" r="9.6" fill="#72ca4e" stroke="#58a03c" stroke-width="1"/></svg>
<div class="a c o" style="left:112px;top:769.8px">A1199T</div>
<div class="a c d" style="left:250px;top:769.8px">11/24/2022</div>
<div class="a c" style="left:362px;top:769.8px">Abercrombie</div>
<div class="a c" style="left:662px;top:769.8px">Scheduled</div>
<div class="a c" style="left:785px;top:769.8px">Confirmation S...</div>
<div class="a c d" style="left:941px;top:769.8px">12/1/2022</div>
<div class="a c n r" style="left:1319px;top:769.8px;width:109px">7.50</div>
<div class="a c n r" style="left:1431px;top:769.8px;width:143px">7.50</div>
<div class="a c n r" style="left:1577px;top:769.8px;width:116px">0.00</div>
<svg class="a" style="left:43px;top:798.5px" width="19" height="19" viewBox="0 0 19 19"><rect x="0.8" y="0.8" width="17.4" height="17.4" fill="#fff" stroke="#8e8e8e" stroke-width="1.6"/></svg>
<svg class="a" style="left:79px;top:798.0px" width="21" height="21" viewBox="0 0 21 21"><circle cx="10.5" cy="10.5" r="9.6" fill="#72ca4e" stroke="#58a03c" stroke-width="1"/></svg>
<div class="a c o" style="left:112px;top:798.3px">A1521T</div>
<div class="a c d" style="left:250px;top:798.3px">11/25/2022</div>
<div class="a c" style="left:362px;top:798.3px">Burgers and...</div>
<div class="a c" style="left:662px;top:798.3px">Scheduled</div>
<div class="a c" style="left:785px;top:798.3px">Packaging</div>
<div class="a c d" style="left:941px;top:798.3px">12/2/2022</div>
<div class="a c n r" style="left:1319px;top:798.3px;width:109px">1438.34</div>
<div class="a c n r" style="left:1431px;top:798.3px;width:143px">1438.34</div>
<div class="a c n r" style="left:1577px;top:798.3px;width:116px">0.00</div>
<svg class="a" style="left:43px;top:827.0px" width="19" height="19" viewBox="0 0 19 19"><rect x="0.8" y="0.8" width="17.4" height="17.4" fill="#fff" stroke="#8e8e8e" stroke-width="1.6"/></svg>
<svg class="a" style="left:79px;top:826.5px" width="21" height="21" viewBox="0 0 21 21"><circle cx="10.5" cy="10.5" r="9.6" fill="#72ca4e" stroke="#58a03c" stroke-width="1"/></svg>
<div class="a c o" style="left:112px;top:826.8px">A1522T</div>
<div class="a c d" style="left:250px;top:826.8px">11/25/2022</div>
<div class="a c" style="left:362px;top:826.8px">Tony</div>
<div class="a c" style="left:662px;top:826.8px">Scheduled</div>
<div class="a c" style="left:785px;top:826.8px">Ready to Pick</div>
<div class="a c d" style="left:941px;top:826.8px">12/2/2022</div>
<div class="a c n r" style="left:1319px;top:826.8px;width:109px">442.06</div>
<div class="a c n r" style="left:1431px;top:826.8px;width:143px">442.06</div>
<div class="a c n r" style="left:1577px;top:826.8px;width:116px">0.00</div>
<svg class="a" style="left:43px;top:855.5px" width="19" height="19" viewBox="0 0 19 19"><rect x="0.8" y="0.8" width="17.4" height="17.4" fill="#fff" stroke="#8e8e8e" stroke-width="1.6"/></svg>
<svg class="a" style="left:79px;top:855.0px" width="21" height="21" viewBox="0 0 21 21"><circle cx="10.5" cy="10.5" r="9.6" fill="#72ca4e" stroke="#58a03c" stroke-width="1"/></svg>
<div class="a c o" style="left:112px;top:855.3px">A1523T</div>
<div class="a c d" style="left:250px;top:855.3px">12/9/2022</div>
<div class="a c" style="left:362px;top:855.3px">Adams</div>
<div class="a c" style="left:662px;top:855.3px">Scheduled</div>
<div class="a c" style="left:785px;top:855.3px">Ready to Pick</div>
<div class="a c d" style="left:941px;top:855.3px">12/16/2022</div>
<div class="a c n r" style="left:1319px;top:855.3px;width:109px">12.50</div>
<div class="a c n r" style="left:1431px;top:855.3px;width:143px">12.50</div>
<div class="a c n r" style="left:1577px;top:855.3px;width:116px">0.00</div>
<svg class="a" style="left:43px;top:884.0px" width="19" height="19" viewBox="0 0 19 19"><rect x="0.8" y="0.8" width="17.4" height="17.4" fill="#fff" stroke="#8e8e8e" stroke-width="1.6"/></svg>
<svg class="a" style="left:79px;top:883.5px" width="21" height="21" viewBox="0 0 21 21"><circle cx="10.5" cy="10.5" r="9.6" fill="#72ca4e" stroke="#58a03c" stroke-width="1"/></svg>
<div class="a c o" style="left:112px;top:883.8px">A1524T</div>
<div class="a c d" style="left:250px;top:883.8px">12/12/2022</div>
<div class="a c" style="left:362px;top:883.8px">ABC</div>
<div class="a c" style="left:662px;top:883.8px">Scheduled</div>
<div class="a c" style="left:785px;top:883.8px">Ready to Pick</div>
<div class="a c d" style="left:941px;top:883.8px">12/19/2022</div>
<div class="a c n r" style="left:1319px;top:883.8px;width:109px">116.00</div>
<div class="a c n r" style="left:1431px;top:883.8px;width:143px">116.00</div>
<div class="a c n r" style="left:1577px;top:883.8px;width:116px">0.00</div>
<svg class="a" style="left:43px;top:912.5px" width="19" height="19" viewBox="0 0 19 19"><rect x="0.8" y="0.8" width="17.4" height="17.4" fill="#fff" stroke="#8e8e8e" stroke-width="1.6"/></svg>
<svg class="a" style="left:79px;top:912.0px" width="21" height="21" viewBox="0 0 21 21"><circle cx="10.5" cy="10.5" r="9.6" fill="#72ca4e" stroke="#58a03c" stroke-width="1"/></svg>
<div class="a c o" style="left:112px;top:912.3px">A1525T</div>
<div class="a c d" style="left:250px;top:912.3px">12/12/2022</div>
<div class="a c" style="left:362px;top:912.3px">ABC</div>
<div class="a c" style="left:662px;top:912.3px">Scheduled</div>
<div class="a c" style="left:785px;top:912.3px">Ready to Pick</div>
<div class="a c d" style="left:941px;top:912.3px">12/19/2022</div>
<div class="a c n r" style="left:1319px;top:912.3px;width:109px">75.00</div>
<div class="a c n r" style="left:1431px;top:912.3px;width:143px">75.00</div>
<div class="a c n r" style="left:1577px;top:912.3px;width:116px">0.00</div>
<div class="a" style="left:1894px;top:253px;width:26px;height:699px;background:#f0f0f0"></div>
<div class="a" style="left:1894px;top:441px;width:26px;height:486px;background:#cdcdcd"></div>
<svg class="a" style="left:1900px;top:261px" width="13" height="11" viewBox="0 0 13 11"><path d="M1.8 9.2 L6.5 3.6 L11.2 9.2" stroke="#000" stroke-width="2.7" fill="none"/></svg>
<svg class="a" style="left:1900px;top:933px" width="13" height="12" viewBox="0 0 13 12"><path d="M1.8 2.6 L6.5 8.6 L11.2 2.6" stroke="#000" stroke-width="3" fill="none"/></svg>
<div class="a" style="left:1902px;top:679px;width:10px;height:2px;background:#606060"></div>
<div class="a" style="left:1902px;top:683px;width:10px;height:2px;background:#606060"></div>
<div class="a" style="left:1902px;top:687px;width:10px;height:2px;background:#606060"></div>
<div class="a" style="left:34px;top:952px;width:1860px;height:26px;background:#f0f0f0"></div>
<div class="a" style="left:60px;top:952px;width:947px;height:26px;background:#cdcdcd"></div>
<svg class="a" style="left:42px;top:959px" width="12" height="13" viewBox="0 0 12 13"><path d="M9.4 2 L3.4 6.3 L9.4 10.6" stroke="#000" stroke-width="3.2" fill="none"/></svg>
<svg class="a" style="left:1874px;top:958px" width="12" height="14" viewBox="0 0 12 14"><path d="M3 3 L8.6 7.6 L3 12" stroke="#000" stroke-width="3" fill="none"/></svg>
<div class="a" style="left:529px;top:960px;width:2px;height:10px;background:#606060"></div>
<div class="a" style="left:533px;top:960px;width:2px;height:10px;background:#606060"></div>
<div class="a" style="left:537px;top:960px;width:2px;height:10px;background:#606060"></div>
</body></html>
